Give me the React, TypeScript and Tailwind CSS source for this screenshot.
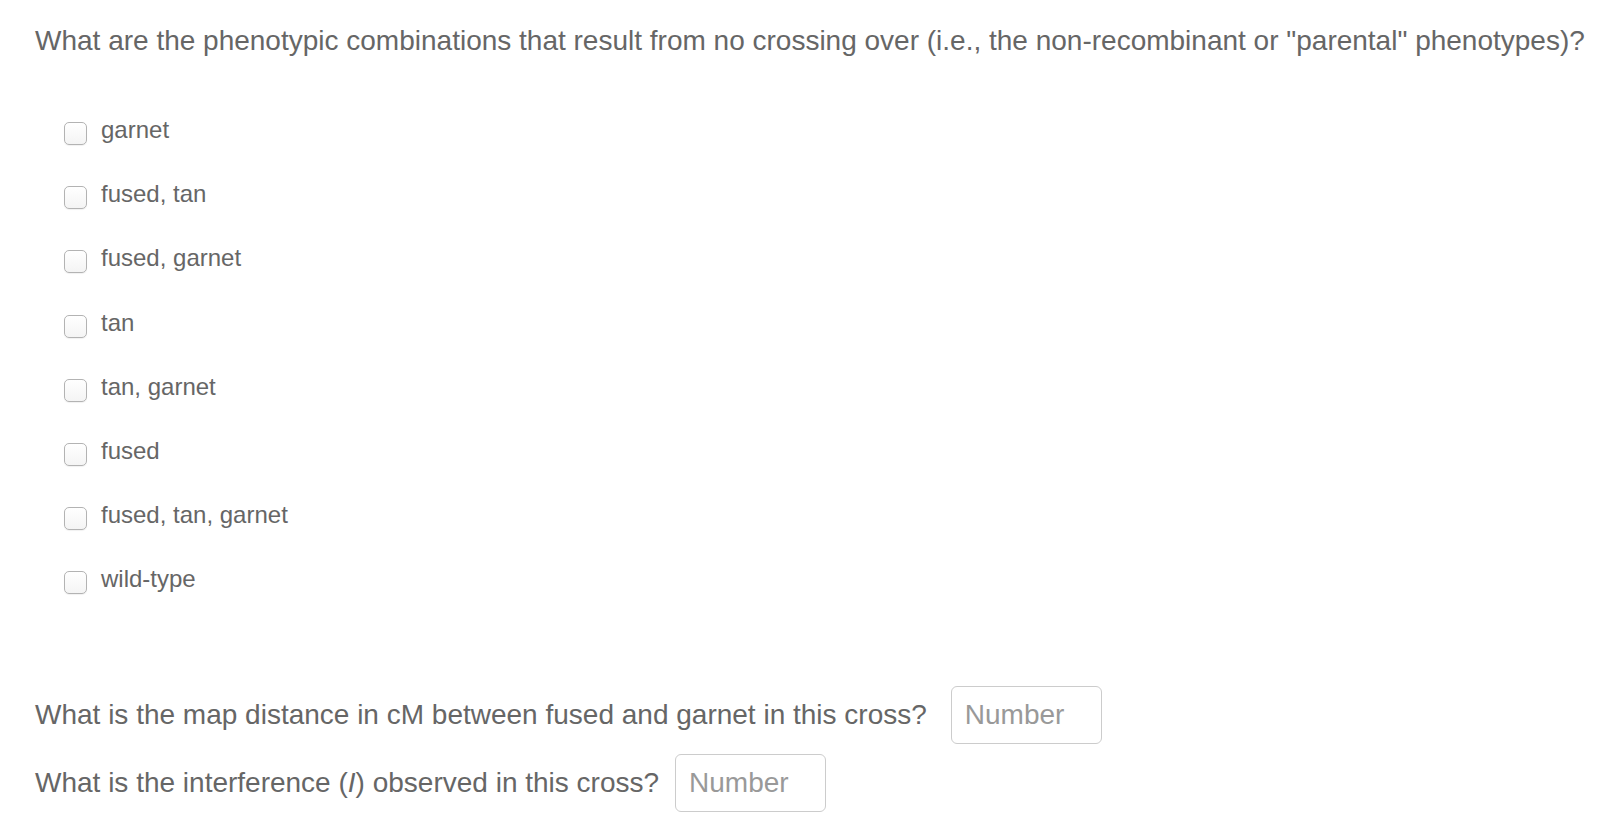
import React from 'react';

const options = [
  'garnet',
  'fused, tan',
  'fused, garnet',
  'tan',
  'tan, garnet',
  'fused',
  'fused, tan, garnet',
  'wild-type',
];

const Box: React.FC = () => (
  <span className="inline-block w-[23px] h-[23px] shrink-0 rounded-[5px] border border-[#b3b3b3] bg-gradient-to-b from-white to-[#f4f4f4] shadow-[0_1px_1px_rgba(0,0,0,0.06)] mt-[9px]" />
);

const NumberInput: React.FC = () => (
  <input
    type="text"
    placeholder="Number"
    className="w-[151px] h-[58px] shrink-0 rounded-[6px] border border-[#cccccc] bg-white px-[13px] text-[28px] text-[#555] placeholder:text-[#999] outline-none"
  />
);

export default function App() {
  return (
    <div className="min-h-screen bg-white text-[#666] text-[28px] leading-[34px] font-['Liberation_Sans',Helvetica,Arial,sans-serif] pl-[35px] pt-[24px]">
      <p>What are the phenotypic combinations that result from no crossing over (i.e., the non-recombinant or "parental" phenotypes)?</p>

      {/* answer choices */}
      <div className="mt-[40px] pl-[29px] text-[24px]">
        {options.map((opt) => (
          <label key={opt} className="flex items-start gap-[14px] h-[64.2px] pt-[15px] cursor-pointer">
            <Box />
            <span>{opt}</span>
          </label>
        ))}
      </div>

      {/* numeric answers */}
      <div className="mt-[74px] flex flex-col gap-[10px]">
        <div className="flex items-center gap-[24px]">
          <span>What is the map distance in cM between fused and garnet in this cross?</span>
          <NumberInput />
        </div>
        <div className="flex items-center gap-[16px]">
          <span>
            What is the interference (<i>I</i>) observed in this cross?
          </span>
          <NumberInput />
        </div>
      </div>
    </div>
  );
}
